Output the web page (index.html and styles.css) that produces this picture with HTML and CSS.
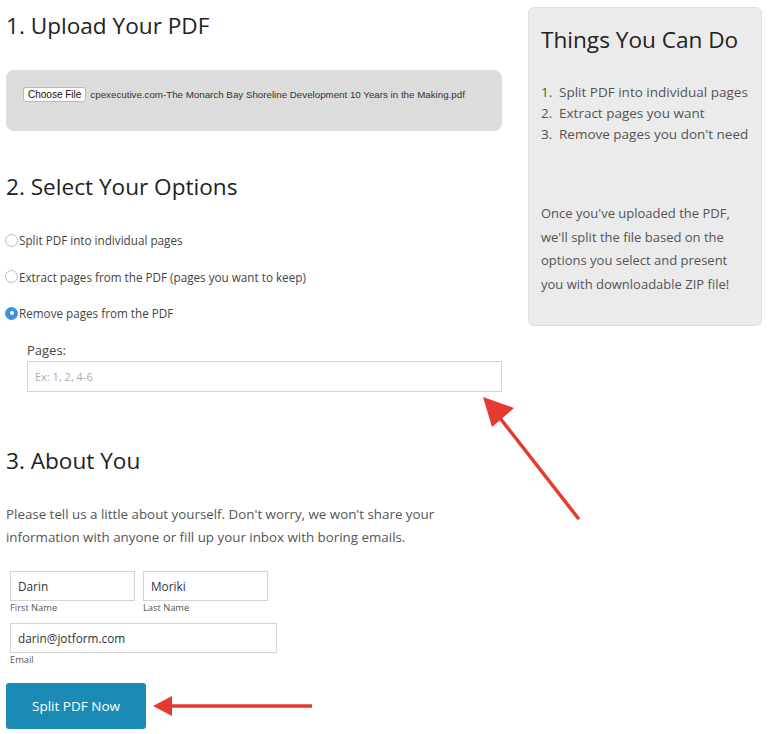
FILE: index.html
```html
<!DOCTYPE html>
<html>
<head>
<meta charset="utf-8">
<link rel="stylesheet" href="styles.css">
</head>
<body>
<div class="page">
  <main class="main">
    <h1 class="title t1">1. Upload Your PDF</h1>
    <div class="upload">
      <span class="filebtn">Choose File</span>
      <span class="filename">cpexecutive.com-The Monarch Bay Shoreline Development 10 Years in the Making.pdf</span>
    </div>

    <h1 class="title t2">2. Select Your Options</h1>
    <div class="option first"><span class="radio"></span>Split PDF into individual pages</div>
    <div class="option"><span class="radio"></span>Extract pages from the PDF (pages you want to keep)</div>
    <div class="option"><span class="radio checked"></span>Remove pages from the PDF</div>
    <div class="pages">
      <div class="pages-label">Pages:</div>
      <div class="field pages-input placeholder">Ex: 1, 2, 4-6</div>
    </div>

    <h1 class="title t3">3. About You</h1>
    <p class="intro">Please tell us a little about yourself. Don't worry, we won't share your information with anyone or fill up your inbox with boring emails.</p>
    <div class="names">
      <div class="namefield">
        <div class="field text">Darin</div>
        <div class="sublabel">First Name</div>
      </div>
      <div class="namefield">
        <div class="field text">Moriki</div>
        <div class="sublabel">Last Name</div>
      </div>
    </div>
    <div class="emailfield">
      <div class="field text">darin@jotform.com</div>
      <div class="sublabel">Email</div>
    </div>
    <div class="submit">Split PDF Now</div>
  </main>

  <aside class="side">
    <h2 class="side-title">Things You Can Do</h2>
    <ol class="side-list">
      <li>Split PDF into individual pages</li>
      <li>Extract pages you want</li>
      <li>Remove pages you don't need</li>
    </ol>
    <p class="side-text">Once you've uploaded the PDF, we'll split the file based on the options you select and present you with downloadable ZIP file!</p>
  </aside>

  <svg class="arrow arrow-up" width="120" height="140" viewBox="0 0 120 140">
    <line x1="96" y1="122" x2="18" y2="22" stroke="#e43a2f" stroke-width="3.5" stroke-linecap="round"/>
    <polygon points="1,1 32,12 10,31" fill="#e43a2f"/>
  </svg>
  <svg class="arrow arrow-left" width="170" height="24" viewBox="0 0 170 24">
    <line x1="18" y1="12" x2="161" y2="12" stroke="#e43a2f" stroke-width="3.5"/>
    <polygon points="2,12 21,2 21,22" fill="#e43a2f"/>
  </svg>
</div>
</body>
</html>
```

FILE: styles.css
```css
html, body {
  margin: 0;
  padding: 0;
  background: #ffffff;
}

body {
  font-family: "Open Sans", "Liberation Sans", sans-serif;
  color: #555555;
}

.page {
  position: relative;
  display: flex;
  gap: 26px;
  padding-left: 6px;
  width: 768px;
  height: 734px;
  box-sizing: border-box;
  overflow: hidden;
}

.main {
  width: 496px;
  flex: none;
}

.title {
  margin: 0;
  font-weight: 400;
  font-size: 22.6px;
  line-height: 29px;
  color: #222222;
}

.t1 { margin-top: 11px; }
.t2 { margin-top: 41px; }
.t3 { margin-top: 54px; }

.upload {
  margin-top: 30px;
  height: 61px;
  box-sizing: border-box;
  background: #dcdcdc;
  border-radius: 8px;
  padding: 17px 0 0 17px;
  display: flex;
  align-items: flex-start;
  gap: 4px;
}

.filebtn {
  display: inline-block;
  font-family: "Liberation Sans", Arial, sans-serif;
  font-size: 10px;
  line-height: 13px;
  color: #111;
  background: #ffffff;
  border: 1px solid #b9b9b9;
  border-radius: 3px;
  padding: 0 4px;
}

.filename {
  font-family: "Liberation Sans", Arial, sans-serif;
  font-size: 9.75px;
  line-height: 15px;
  color: #333;
}

.option {
  display: flex;
  align-items: center;
  font-size: 11.7px;
  line-height: 20px;
  color: #444;
  margin-top: 16.5px;
  margin-left: -1px;
}

.option.first { margin-top: 29px; }

.radio {
  width: 13px;
  height: 13px;
  border: 1px solid #bcbcbc;
  border-radius: 50%;
  box-sizing: border-box;
  margin-right: 1px;
  background: #fff;
  position: relative;
}

.radio.checked {
  background: #3d8fe6;
  border-color: #3d8fe6;
}

.radio.checked::after {
  content: "";
  position: absolute;
  left: 3.5px;
  top: 3.5px;
  width: 4px;
  height: 4px;
  border-radius: 50%;
  background: #fff;
}

.pages {
  margin-top: 18px;
  margin-left: 21px;
}

.pages-label {
  font-size: 13px;
  line-height: 18px;
  color: #444;
  margin-bottom: 2px;
}

.field {
  border: 1px solid #d4d4d4;
  box-sizing: border-box;
  background: #fff;
  font-size: 12px;
  display: flex;
  align-items: center;
  padding-left: 7px;
}

.pages-input {
  height: 31px;
  width: 475px;
}

.placeholder {
  color: #aaaaaa;
  font-size: 11px;
}

.intro {
  margin: 28px 0 0 0;
  font-size: 13.35px;
  line-height: 23px;
  color: #555;
  width: 460px;
}

.names {
  display: flex;
  gap: 8px;
  margin-top: 22px;
  margin-left: 4px;
}

.namefield {
  width: 125px;
}

.text {
  height: 30px;
  color: #333;
  font-size: 11.8px;
}

.sublabel {
  font-size: 9.3px;
  line-height: 13px;
  color: #555;
}

.emailfield {
  width: 267px;
  margin-top: 9px;
  margin-left: 4px;
}

.submit {
  margin-top: 17px;
  width: 140px;
  height: 46px;
  background: #1b8bb5;
  border-radius: 3px;
  color: #ffffff;
  font-size: 13.5px;
  display: flex;
  align-items: center;
  justify-content: center;
}

.side {
  width: 234px;
  flex: none;
  align-self: flex-start;
  margin-top: 7px;
  height: 319px;
  box-sizing: border-box;
  background: #ebebeb;
  border: 1px solid #e0e0e0;
  border-radius: 6px;
  padding: 19px 10px 0 12px;
}

.side-title {
  margin: 0;
  font-weight: 400;
  font-size: 22.6px;
  line-height: 26px;
  color: #222;
}

.side-list {
  margin: 29px 0 0 0;
  padding: 0;
  list-style: none;
  counter-reset: item;
  font-size: 13.5px;
  line-height: 21px;
  color: #555;
}

.side-list li {
  counter-increment: item;
}

.side-list li::before {
  content: counter(item) ".";
  display: inline-block;
  width: 18px;
}

.side-text {
  margin: 57px 0 0 0;
  font-size: 13px;
  line-height: 23.6px;
  color: #555;
}

.arrow {
  position: absolute;
}

.arrow-up {
  left: 482px;
  top: 396px;
}

.arrow-left {
  left: 151px;
  top: 694px;
}
```
